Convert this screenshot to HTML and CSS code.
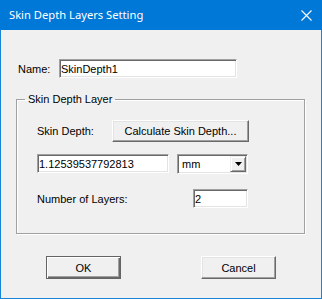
FILE: index.html
```html
<!DOCTYPE html>
<html lang="en">
<head>
    <meta charset="UTF-8">
    <meta name="viewport" content="width=device-width, initial-scale=1.0">
    <title>Skin Depth Layers Setting</title>
    <link rel="stylesheet" href="styles.css">
</head>
<body>

<div class="window">
    <div class="titlebar">
        <span class="title">Skin Depth Layers Setting</span>
        <svg class="close" width="11" height="11" viewBox="0 0 11 11">
            <path d="M0.5 0.5 L10.5 10.5 M10.5 0.5 L0.5 10.5" stroke="#fff" stroke-width="1.1" fill="none"/>
        </svg>
    </div>

    <div class="client">
        <div class="row name-row">
            <label class="name-label" for="nameField">Name:</label>
            <input class="field name-field" id="nameField" type="text" value="SkinDepth1">
        </div>

        <fieldset class="group">
            <legend>Skin Depth Layer</legend>

            <div class="row depth-row">
                <span class="depth-label">Skin Depth:</span>
                <button class="btn calc-btn">Calculate Skin Depth...</button>
            </div>

            <div class="row value-row">
                <input class="field value-field" type="text" value="1.12539537792813">
                <div class="combo">
                    <span class="combo-text">mm</span>
                    <span class="combo-arrow">
                        <svg width="7" height="4" viewBox="0 0 7 4"><path d="M0 0 H7 L3.5 4 Z" fill="#000"/></svg>
                    </span>
                </div>
            </div>

            <div class="row layers-row">
                <span class="layers-label">Number of Layers:</span>
                <input class="field layers-field" type="text" value="2">
            </div>
        </fieldset>

        <div class="row buttons">
            <button class="btn default-btn">OK</button>
            <button class="btn cancel-btn">Cancel</button>
        </div>
    </div>
</div>

</body>
</html>
```

FILE: styles.css
```css
body {
    margin: 0;
    padding: 0;
    font-family: "Liberation Sans", Arial, sans-serif;
    font-size: 11px;
    color: #000;
}
.window {
    width: 322px;
    height: 299px;
    box-sizing: border-box;
    border: 1px solid #1883d7;
    border-top: none;
    background-color: #f0f0f0;
}
.titlebar {
    height: 30px;
    margin: 0 -1px;
    background-color: #0078d7;
    display: flex;
    align-items: center;
    justify-content: space-between;
    padding: 0 10px 0 9px;
}
.title {
    font-family: "Noto Sans", "Open Sans", sans-serif;
    font-size: 11.2px;
    color: #fff;
    margin-top: -1px;
}
.close {
    display: block;
}
.client {
    padding-left: 15px;
}
.row {
    display: flex;
    align-items: center;
}
.field {
    box-sizing: border-box;
    height: 19px;
    margin: 0;
    padding: 0 1px;
    font-family: "Liberation Sans", Arial, sans-serif;
    font-size: 11px;
    color: #000;
    background-color: #fff;
    border: 1px solid;
    border-color: #a0a0a0 #fff #fff #a0a0a0;
    box-shadow: inset 1px 1px 0 #696969, inset -1px -1px 0 #e3e3e3;
    outline: none;
}
.name-row {
    margin-top: 29px;
    margin-left: 2px;
}
.name-label {
    width: 41px;
}
.name-field {
    width: 178px;
}
.group {
    width: 289px;
    box-sizing: border-box;
    margin: 15px 0 0 0;
    padding: 14px 0 25px 20px;
    border: 1px solid #a0a0a0;
    box-shadow: inset 1px 1px 0 #fff, 1px 1px 0 #fff;
}
.group legend {
    padding: 0 3px;
    margin-left: -12px;
    line-height: 13px;
}
.btn {
    box-sizing: border-box;
    margin: 0;
    padding: 0;
    font-family: "Liberation Sans", Arial, sans-serif;
    font-size: 11px;
    color: #000;
    background-color: #f0f0f0;
    border: 1px solid;
    border-color: #fff #696969 #696969 #fff;
    box-shadow: inset -1px -1px 0 #a0a0a0, inset 1px 1px 0 #e3e3e3;
}
.depth-row {
    height: 22px;
}
.depth-label {
    width: 75px;
}
.calc-btn {
    width: 137px;
    height: 22px;
}
.value-row {
    margin-top: 12px;
    align-items: flex-start;
}
.value-field {
    width: 132px;
}
.combo {
    box-sizing: border-box;
    width: 71px;
    height: 20px;
    margin-left: 8px;
    display: flex;
    align-items: center;
    justify-content: space-between;
    background-color: #fff;
    border: 1px solid;
    border-color: #a0a0a0 #fff #fff #a0a0a0;
    box-shadow: inset 1px 1px 0 #696969, inset -1px -1px 0 #e3e3e3;
    padding: 1px;
}
.combo-text {
    padding-left: 3px;
}
.combo-arrow {
    box-sizing: border-box;
    width: 16px;
    height: 16px;
    display: flex;
    align-items: center;
    justify-content: center;
    background-color: #f0f0f0;
    border: 1px solid;
    border-color: #f0f0f0 #696969 #696969 #f0f0f0;
    box-shadow: inset 1px 1px 0 #fff, inset -1px -1px 0 #a0a0a0;
}
.combo-arrow svg {
    display: block;
    margin-left: 1px;
}
.layers-row {
    margin-top: 15px;
}
.layers-label {
    width: 156px;
}
.layers-field {
    width: 55px;
}
.buttons {
    margin-top: 22px;
    margin-left: 30px;
}
.default-btn, .cancel-btn {
    width: 75px;
    height: 23px;
}
.default-btn {
    border: 1px solid #646464;
    box-shadow: inset 1px 1px 0 #fff, inset -1px -1px 0 #696969, inset -2px -2px 0 #a0a0a0;
}
.cancel-btn {
    margin-left: 80px;
}
```
